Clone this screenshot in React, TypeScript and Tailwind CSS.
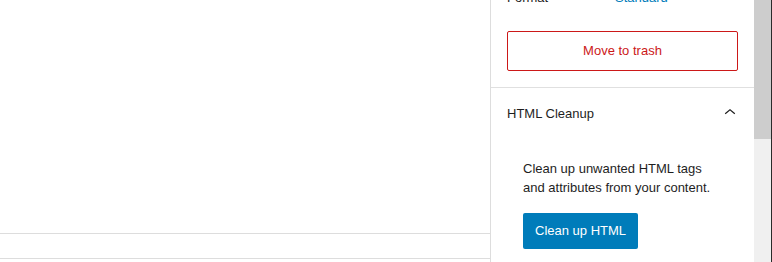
import React from "react";

export default function App() {
  return (
    <div
      className="flex h-[262px] w-[772px] overflow-hidden bg-white text-[13px] text-[#1e1e1e]"
      style={{ fontFamily: '"Liberation Sans", Arial, sans-serif' }}
    >
      <div className="flex w-[490px] flex-col">
        <div className="h-[233px]" />
        <div className="h-[25px] border-t border-[#dddddd]" />
        <div className="border-t border-[#dddddd]" />
      </div>
      <div className="flex w-[264px] flex-col border-l border-[#dddddd]">
        <div className="-mt-[12px] flex h-[20px] items-center px-4 leading-5">
          <span className="w-[108px]">Format</span>
          <span className="text-[#007cba]">Standard</span>
        </div>
        <div className="px-4 pb-4 pt-[23px]">
          <button className="flex h-[40px] w-full items-center justify-center rounded-[2px] border border-[#cc1818] text-[#cc1818]">
            Move to trash
          </button>
        </div>
        <div className="border-t border-[#e0e0e0]">
          <div className="flex h-[51px] items-center justify-between px-4">
            <span>HTML Cleanup</span>
            <svg width="24" height="24" viewBox="0 0 24 24" className="mr-[-4px] mb-[3px]">
              <path d="M6.8 13.2L12 9l5.2 4.2-.8 1L12 10.6l-4.4 3.6-.8-1z" fill="#1e1e1e" />
            </svg>
          </div>
          <div className="px-8 pt-[20px]">
            <p className="leading-[19px]">
              Clean up unwanted HTML tags
              <br />
              and attributes from your content.
            </p>
            <button className="mt-[16px] h-[36px] rounded-[2px] bg-[#007cba] px-3 text-white">
              Clean up HTML
            </button>
          </div>
        </div>
      </div>
      <div className="relative w-[18px] bg-[#f0f0f0]">
        <div className="h-[139px] w-[17px] bg-[#cdcdcd]" />
        <div className="absolute right-0 top-0 h-full w-px bg-[#2a2a2a]" />
      </div>
    </div>
  );
}
